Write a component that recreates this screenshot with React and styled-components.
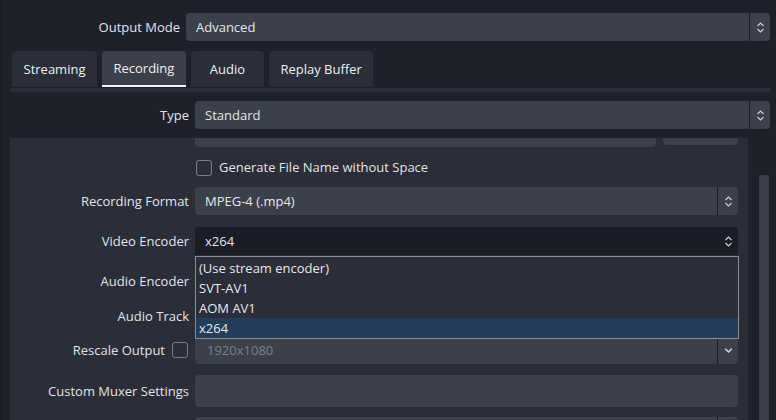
import React from 'react';
import styled, { createGlobalStyle } from 'styled-components';

const Global = createGlobalStyle`
  html, body { margin: 0; padding: 0; background: #1f212a; }
  body {
    font-family: "Open Sans", "Noto Sans", sans-serif;
    font-size: 13px;
    color: #e3e5ea;
  }
  * { box-sizing: border-box; }
`;

const Window = styled.div`
  width: 776px;
  height: 420px;
  overflow: hidden;
  background: #1f212a;
  box-shadow: inset 2px 0 #1a1b21;
  display: flex;
  flex-direction: column;
  padding-top: 13px;
`;

const FormRow = styled.div`
  display: grid;
  grid-template-columns: ${p => p.$label}px 1fr;
  column-gap: 6px;
  align-items: center;
  height: ${p => p.$h || 28}px;
  padding: ${p => p.$pad || '0'};
  margin-top: ${p => p.$mt || 0}px;
  flex: none;
`;

const Label = styled.div`
  text-align: right;
  color: #e1e3e8;
  white-space: nowrap;
  display: flex;
  justify-content: flex-end;
  align-items: center;
  gap: 7px;
  padding-bottom: 1px;
`;

const Combo = styled.div`
  display: flex;
  height: ${p => p.$h || 28}px;
  border-radius: ${p => (p.$open ? '4px 4px 0 0' : '4px')};
  overflow: hidden;
  background: ${p => (p.$open ? '#1b1c25' : '#3c404b')};
  color: ${p => (p.$disabled ? '#7d808a' : '#e3e5ea')};
`;

const ComboText = styled.div`
  flex: 1;
  display: flex;
  align-items: center;
  padding-left: ${p => p.$indent || 10}px;
  padding-bottom: 1px;
  white-space: nowrap;
`;

const ComboArrow = styled.div`
  width: ${p => (p.$split ? 21 : 20)}px;
  flex: none;
  border-left: ${p => (p.$split ? '1px solid #1c1d24' : 'none')};
  display: flex;
  align-items: center;
  justify-content: center;
`;

const TabBar = styled.div`
  display: flex;
  gap: 5px;
  margin: 10px 0 0 12px;
  height: 36px;
  flex: none;
`;

const Tab = styled.div`
  min-width: 73px;
  padding: 0 11.5px;
  border-radius: 4px 4px 0 0;
  background: ${p => (p.$active ? '#3c404b' : '#2b2e38')};
  border-bottom: ${p => (p.$active ? '2px solid #f2f3f5' : 'none')};
  display: flex;
  align-items: center;
  justify-content: center;
  color: #eceef2;
  white-space: nowrap;
`;

const TabLine = styled.div`
  margin: 1px 0 0 10px;
  width: 761px;
  height: 4px;
  background: #2b2e38;
  flex: none;
`;

const ScrollSection = styled.div`
  margin-top: 9px;
  flex: 1;
  display: flex;
  padding-left: 10px;
  min-height: 0;
`;

const Panel = styled.div`
  width: 738px;
  background: #2b2d38;
  overflow: hidden;
  position: relative;
`;

const PanelContent = styled.div`
  margin-top: -19px;
  display: flex;
  flex-direction: column;
  gap: 12px;
  padding-right: 10px;
`;

const ScrollTrack = styled.div`
  width: 28px;
  padding: 37px 0 0 11px;
`;

const Thumb = styled.div`
  width: 10px;
  height: 320px;
  border-radius: 3px;
  background: #3c404b;
`;

const PathField = styled.div`
  display: flex;
  gap: 7px;
  align-items: flex-start;
  height: 28px;
`;

const TextBox = styled.div`
  flex: ${p => (p.$w ? 'none' : 1)};
  width: ${p => (p.$w ? `${p.$w}px` : 'auto')};
  height: ${p => p.$h || 28}px;
  border-radius: 4px;
  background: #3c404b;
`;

const CheckLine = styled.label`
  display: flex;
  align-items: center;
  gap: 7px;
  padding-left: 1px;
  color: #e1e3e8;
`;

const CheckText = styled.span`
  padding-bottom: 1px;
`;

const CheckBox = styled.span`
  width: 16px;
  height: 16px;
  border: 1px solid #7a7d86;
  border-radius: 3px;
  flex: none;
  display: inline-block;
  margin-right: ${p => p.$mr || 0}px;
`;

const Popup = styled.div`
  position: absolute;
  left: 185px;
  top: 118px;
  width: 544px;
  height: 83px;
  border: 1px solid #8c8e95;
  background: #2b2d38;
  padding: 1px 0;
  z-index: 2;
`;

const Item = styled.div`
  height: 20px;
  display: flex;
  align-items: center;
  padding-left: 3px;
  padding-bottom: 1px;
  background: ${p => (p.$active ? '#233d5b' : 'transparent')};
  color: #e6e8ec;
  white-space: nowrap;
`;

const UpDown = () => (
  <svg width="9" height="13" viewBox="0 0 9 13" fill="none">
    <polyline points="1.5,5 4.5,2 7.5,5" stroke="#d2d4da" strokeWidth="1.1" />
    <polyline points="1.5,8 4.5,11 7.5,8" stroke="#d2d4da" strokeWidth="1.1" />
  </svg>
);

const Down = () => (
  <svg width="9" height="7" viewBox="0 0 9 7" fill="none">
    <polyline points="1.2,1.8 4.5,5 7.8,1.8" stroke="#d6d8de" strokeWidth="1.6" />
  </svg>
);

const Select = ({ children, open, split = true, single, disabled, indent, h }) => (
  <Combo $open={open} $disabled={disabled} $h={h}>
    <ComboText $indent={indent}>{children}</ComboText>
    <ComboArrow $split={split && !open}>{single ? <Down /> : <UpDown />}</ComboArrow>
  </Combo>
);

export default function App() {
  return (
    <>
      <Global />
      <Window>
        <FormRow $label={170} $pad="0 6px 0 10px">
          <Label>Output Mode</Label>
          <Select>Advanced</Select>
        </FormRow>

        <TabBar>
          <Tab>Streaming</Tab>
          <Tab $active>Recording</Tab>
          <Tab>Audio</Tab>
          <Tab>Replay Buffer</Tab>
        </TabBar>
        <TabLine />

        <FormRow $label={179} $pad="0 6px 0 10px" $mt={9}>
          <Label>Type</Label>
          <Select>Standard</Select>
        </FormRow>

        <ScrollSection>
          <Panel>
            <PanelContent>
              <FormRow $label={179}>
                <Label />
                <PathField>
                  <TextBox />
                  <TextBox $w={75} $h={26} />
                </PathField>
              </FormRow>
              <FormRow $label={179} $h={16} $mt={-1}>
                <span />
                <CheckLine>
                  <CheckBox />
                  <CheckText>Generate File Name without Space</CheckText>
                </CheckLine>
              </FormRow>
              <FormRow $label={179} $mt={1}>
                <Label>Recording Format</Label>
                <Select>MPEG-4 (.mp4)</Select>
              </FormRow>
              <FormRow $label={179}>
                <Label>Video Encoder</Label>
                <Select open>x264</Select>
              </FormRow>
              <FormRow $label={179}>
                <Label>Audio Encoder</Label>
                <Select />
              </FormRow>
              <FormRow $label={179} $h={17}>
                <Label>Audio Track</Label>
                <span />
              </FormRow>
              <FormRow $label={179}>
                <Label>
                  Rescale Output
                  <CheckBox $mr={1} />
                </Label>
                <Select single disabled indent={12}>1920x1080</Select>
              </FormRow>
              <FormRow $label={179} $h={32} $mt={-1}>
                <Label>Custom Muxer Settings</Label>
                <TextBox $h={32} />
              </FormRow>
              <FormRow $label={179} $mt={-2}>
                <Label />
                <Select single />
              </FormRow>
            </PanelContent>

            <Popup>
              <Item>(Use stream encoder)</Item>
              <Item>SVT-AV1</Item>
              <Item>AOM AV1</Item>
              <Item $active>x264</Item>
            </Popup>
          </Panel>
          <ScrollTrack>
            <Thumb />
          </ScrollTrack>
        </ScrollSection>
      </Window>
    </>
  );
}
